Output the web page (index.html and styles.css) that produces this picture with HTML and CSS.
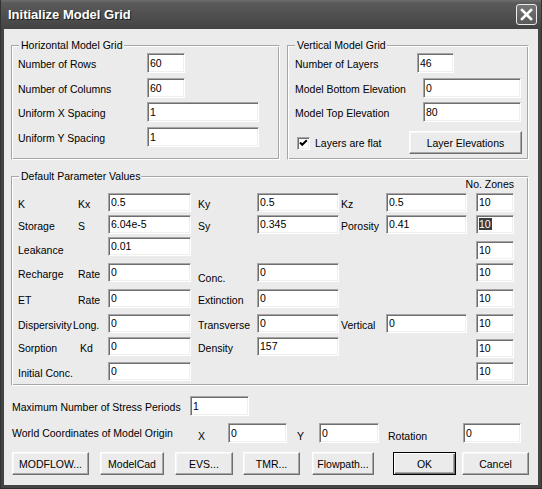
FILE: index.html
```html
<!DOCTYPE html>
<html>
<head>
<meta charset="utf-8">
<title>Initialize Model Grid</title>
<link rel="stylesheet" href="styles.css">
</head>
<body>
<div class="window">
  <div class="titlebar">
    <span class="title">Initialize Model Grid</span>
    <span class="close"><svg width="19" height="19" viewBox="0 0 19 19"><path d="M5 5 L14 14 M14 5 L5 14" stroke="#fff" stroke-width="2.6" stroke-linecap="square"/></svg></span>
  </div>
  <div class="client">
    <div class="top-row">
      <fieldset class="group g-horiz">
        <legend>Horizontal Model Grid</legend>
        <div class="hgrid">
          <span class="lbl">Number of Rows</span><span class="field w38">60</span>
          <span class="lbl">Number of Columns</span><span class="field w38">60</span>
          <span class="lbl">Uniform X Spacing</span><span class="field w112">1</span>
          <span class="lbl">Uniform Y Spacing</span><span class="field w112">1</span>
        </div>
      </fieldset>
      <fieldset class="group g-vert">
        <legend>Vertical Model Grid</legend>
        <div class="vgrid">
          <span class="lbl">Number of Layers</span><span class="field w37 shift-l">46</span>
          <span class="lbl">Model Bottom Elevation</span><span class="field w98">0</span>
          <span class="lbl">Model Top Elevation</span><span class="field w98">80</span>
        </div>
        <div class="flat-row">
          <span class="check"><svg width="11" height="11" viewBox="0 0 11 11"><path d="M2 4.5 L4.2 6.8 L8.8 2.2" fill="none" stroke="#000" stroke-width="2"/></svg></span>
          <span class="check-text">Layers are flat</span>
          <button class="btn b-layer">Layer Elevations</button>
        </div>
      </fieldset>
    </div>

    <fieldset class="group g-params">
      <legend>Default Parameter Values</legend>
      <div class="pgrid">
        <span class="zones-head">No. Zones</span>

        <span class="pl c1">K</span><span class="pl c2">Kx</span><span class="field c3">0.5</span>
        <span class="pl c4">Ky</span><span class="field c5">0.5</span>
        <span class="pl c6">Kz</span><span class="field c7">0.5</span>
        <span class="field zone c8">10</span>

        <span class="pl c1">Storage</span><span class="pl c2">S</span><span class="field c3">6.04e-5</span>
        <span class="pl c4">Sy</span><span class="field c5">0.345</span>
        <span class="pl c6">Porosity</span><span class="field c7">0.41</span>
        <span class="field zone c8"><span class="sel">10</span></span>

        <span class="pl c1 low2">Leakance</span><span class="field c3">0.01</span>
        <span class="field zone c8 down4">10</span>

        <span class="pl c1">Recharge</span><span class="pl c2">Rate</span><span class="field c3">0</span>
        <span class="pl c4 low4">Conc.</span><span class="field c5">0</span>
        <span class="field zone c8">10</span>

        <span class="pl c1">ET</span><span class="pl c2">Rate</span><span class="field c3">0</span>
        <span class="pl c4">Extinction</span><span class="field c5">0</span>
        <span class="field zone c8">10</span>

        <span class="pl c1">Dispersivity</span><span class="pl c2 long">Long.</span><span class="field c3">0</span>
        <span class="pl c4">Transverse</span><span class="field c5">0</span>
        <span class="pl c6">Vertical</span><span class="field c7">0</span>
        <span class="field zone c8">10</span>

        <span class="pl c1">Sorption</span><span class="pl c2 kd">Kd</span><span class="field c3">0</span>
        <span class="pl c4">Density</span><span class="field c5">157</span>
        <span class="field zone c8 down2">10</span>

        <span class="pl c12">Initial Conc.</span><span class="field c3">0</span>
        <span class="field zone c8">10</span>
      </div>
    </fieldset>

    <div class="row-max">
      <span class="lbl-max">Maximum Number of Stress Periods</span>
      <span class="field w59">1</span>
    </div>

    <div class="row-world">
      <span class="lbl-world">World Coordinates of Model Origin</span>
      <span class="axis ax-x">X</span>
      <span class="field w59">0</span>
      <span class="axis ax-y">Y</span>
      <span class="field w60">0</span>
      <span class="axis ax-rot">Rotation</span>
      <span class="field w58">0</span>
    </div>

    <div class="row-buttons">
      <button class="btn b-modflow">MODFLOW...</button>
      <button class="btn b-modelcad">ModelCad</button>
      <button class="btn b-evs">EVS...</button>
      <button class="btn b-tmr">TMR...</button>
      <button class="btn b-flowpath">Flowpath...</button>
      <button class="btn btn-default b-ok">OK</button>
      <button class="btn b-cancel">Cancel</button>
    </div>
  </div>
</div>
</body>
</html>
```

FILE: styles.css
```css
* { box-sizing: border-box; }

body {
  margin: 0;
  background: #404040;
  font-family: "Liberation Sans", Arial, sans-serif;
  font-size: 10.5px;
  color: #000;
}

.window {
  width: 542px;
  height: 489px;
  display: flex;
  flex-direction: column;
  background: #444;
  border-left: 1px solid #333;
  border-right: 1px solid #333;
  border-bottom: 1px solid #2e2e2e;
}

.titlebar {
  height: 29px;
  flex: none;
  display: flex;
  align-items: center;
  justify-content: space-between;
  padding: 0 4px 1px 7px;
  background: linear-gradient(#6e6e6e 0, #5a5a5a 3px, #525252 12px, #4a4a4a 22px, #424242 29px);
}

.title {
  color: #fff;
  font-weight: bold;
  font-size: 13px;
  text-shadow: 1px 1px 0 #1c1c1c;
}

.close {
  width: 21px;
  height: 21px;
  border: 1px solid #ececec;
  border-radius: 3px;
  background: linear-gradient(#767676, #595959);
  display: flex;
  align-items: center;
  justify-content: center;
}

.client {
  flex: 1;
  margin: 0 3px 3px;
  background: #ebebeb;
  display: flex;
  flex-direction: column;
  align-items: flex-start;
}

/* group boxes */
.top-row {
  display: flex;
  gap: 7px;
  margin: 9px 0 0 7px;
}

fieldset.group {
  margin: 0;
  min-width: 0;
  padding: 1px 6px 0 6px;
  border: 1px solid #a6a6a6;
  border-right-color: #fff;
  border-bottom-color: #fff;
  box-shadow: inset 1px 1px 0 #fff, inset -1px -1px 0 #a6a6a6;
}

fieldset.group legend {
  padding: 0 1px 0 2px;
  margin-left: 1px;
  line-height: 14px;
  background: #ebebeb;
}

fieldset.g-horiz { width: 269px; height: 122px; }
fieldset.g-vert { width: 242px; height: 122px; padding-left: 7px; }
fieldset.g-vert legend { margin-left: 0; }

.field {
  display: block;
  height: 20px;
  line-height: 18px;
  padding: 0 2px;
  background: #fff;
  border: 1px solid;
  border-color: #a6a6a6 #fff #fff #a6a6a6;
  box-shadow: inset 1px 1px 0 #6e6e6e, inset -1px -1px 0 #efefef;
  white-space: nowrap;
  overflow: hidden;
}

.w37 { width: 37px; }
.w38 { width: 38px; }
.w58 { width: 58px; }
.w59 { width: 59px; }
.w60 { width: 60px; }
.w98 { width: 98px; }
.w112 { width: 112px; }

.lbl { line-height: 20px; padding-top: 1px; white-space: nowrap; }

.hgrid {
  display: grid;
  grid-template-columns: 129px auto;
  grid-template-rows: 25px 24px 25px 20px;
  align-items: start;
}

.vgrid {
  display: grid;
  grid-template-columns: 128px auto;
  grid-template-rows: 25px 24px 20px;
  align-items: start;
}

.shift-l { margin-left: -6px; }

.flat-row {
  display: flex;
  align-items: center;
  margin-top: 9px;
  padding-left: 2px;
}

.check {
  width: 13px;
  height: 13px;
  display: flex;
  align-items: center;
  justify-content: center;
  background: #fff;
  border: 1px solid;
  border-color: #a6a6a6 #fff #fff #a6a6a6;
  box-shadow: inset 1px 1px 0 #6e6e6e, inset -1px -1px 0 #efefef;
  margin-top: 1px;
}

.check-text { margin-left: 5px; padding-top: 1px; }

/* buttons */
.btn {
  font: inherit;
  color: #000;
  height: 23px;
  padding: 0;
  background: #ebebeb;
  border: 1px solid;
  border-color: #fff #6e6e6e #6e6e6e #fff;
  box-shadow: inset -1px -1px 0 #a6a6a6, inset 1px 1px 0 #f6f6f6;
}

.btn-default {
  border-color: #000;
  box-shadow: inset 1px 1px 0 #fff, inset -1px -1px 0 #6e6e6e, inset -2px -2px 0 #a6a6a6;
}

.b-layer { width: 113px; margin-left: auto; }

/* parameter grid */
fieldset.g-params {
  width: 518px;
  height: 217px;
  margin: 9px 0 0 7px;
  padding: 0 13px 0 6px;
}

.pgrid {
  display: grid;
  grid-template-columns: 60px 30px 83px 66px 82px 47px 81px 47px;
  grid-template-rows: 10px 22px 22px 26px 26px 25px 23px 25px 19px;
  align-items: start;
}

.pgrid .field { height: 19px; line-height: 17px; }

.pl { line-height: 19px; padding-top: 2px; white-space: nowrap; }

.c1 { grid-column: 1; }
.c2 { grid-column: 2; }
.c12 { grid-column: 1 / span 2; }
.c3 { grid-column: 3; }
.c4 { grid-column: 4; padding-left: 7px; }
.c5 { grid-column: 5; }
.c6 { grid-column: 6; padding-left: 2px; }
.c7 { grid-column: 7; }
.c8 { grid-column: 8; }

.zone { width: 38px; justify-self: end; }

.zones-head {
  grid-column: 7 / span 2;
  justify-self: end;
  line-height: 10px;
  margin-top: -4px;
  white-space: nowrap;
}

.low2 { padding-top: 4px; }
.low4 { padding-top: 6px; }
.down4 { margin-top: 4px; }
.down2 { margin-top: 2px; }
.long { margin-left: -5px; }
.kd { margin-left: 2px; }

.sel {
  background: #3c3c3c;
  color: #fff;
  padding-right: 1px;
}

/* bottom rows */
.row-max {
  display: flex;
  align-items: center;
  margin: 10px 0 0 8px;
}

.lbl-max { width: 178px; padding-top: 2px; }

.row-world {
  display: flex;
  align-items: center;
  margin: 7px 0 0 8px;
}

.lbl-world { width: 186px; }
.axis { padding-top: 5px; }
.ax-x { width: 30px; }
.ax-y { width: 32px; padding-left: 10px; }
.ax-rot { width: 84px; padding-left: 9px; }

.row-buttons {
  display: flex;
  margin: 9px 0 0 8px;
}

.b-modflow { width: 77px; }
.b-modelcad { width: 64px; margin-left: 11px; }
.b-evs { width: 58px; margin-left: 11px; }
.b-tmr { width: 57px; margin-left: 10px; }
.b-flowpath { width: 62px; margin-left: 12px; }
.b-ok { width: 63px; margin-left: 19px; }
.b-cancel { width: 67px; margin-left: 6px; }
```
